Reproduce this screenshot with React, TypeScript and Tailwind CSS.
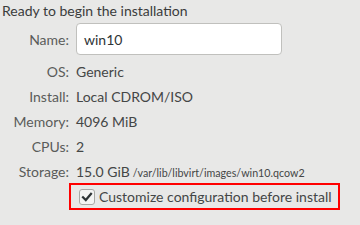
import React from 'react';

const rows: { label: string; value: React.ReactNode }[] = [
  { label: 'OS:', value: 'Generic' },
  { label: 'Install:', value: 'Local CDROM/ISO' },
  { label: 'Memory:', value: '4096 MiB' },
  { label: 'CPUs:', value: '2' },
  {
    label: 'Storage:',
    value: (
      <span>
        15.0 GiB<span className="ml-[3px] text-[10.7px]">/var/lib/libvirt/images/win10.qcow2</span>
      </span>
    ),
  },
];

export default function App() {
  return (
    <div
      className="w-[360px] h-[225px] overflow-hidden bg-[#e8e8e7] text-[#3a3c3c] text-[14px] whitespace-nowrap"
      style={{ fontFamily: 'Lato, "Noto Sans", sans-serif' }}
    >
      <div className="pl-[2px] pt-[1px] h-[20px] leading-[20px]">Ready to begin the installation</div>

      {/* Name */}
      <div className="flex items-center mt-[3px]">
        <div className="w-[69px] text-right text-[#5a5c5a]">Name:</div>
        <div className="ml-[7px] w-[206px] h-[32px] bg-white border border-[#c0c0bd] rounded-[4px] flex items-center pl-[7px] text-[#2e3436]">
          win10
        </div>
      </div>

      {/* Details */}
      <div className="mt-[4px] flex flex-col">
        {rows.map(r => (
          <div key={r.label} className="flex items-center h-[25px]">
            <div className="w-[69px] text-right text-[#5a5c5a]">{r.label}</div>
            <div className="ml-[7px] text-[#444646]">{r.value}</div>
          </div>
        ))}
      </div>

      {/* Customize */}
      <div className="ml-[69px] mt-[-1px] w-[271px] h-[27px] border-2 border-[#ff0000] flex items-center pl-[8px]">
        <span className="w-[16px] h-[16px] rounded-[3px] border border-[#a8a8a5] bg-[#f4f4f3] flex items-center justify-center">
          <svg width="12" height="12" viewBox="0 0 12 12">
            <path d="M2 6.2 L4.8 9 L10 2.8" fill="none" stroke="#2e3436" strokeWidth="2.2" strokeLinecap="square" />
          </svg>
        </span>
        <span className="ml-[4px] text-[#444646]">Customize configuration before install</span>
      </div>
    </div>
  );
}
